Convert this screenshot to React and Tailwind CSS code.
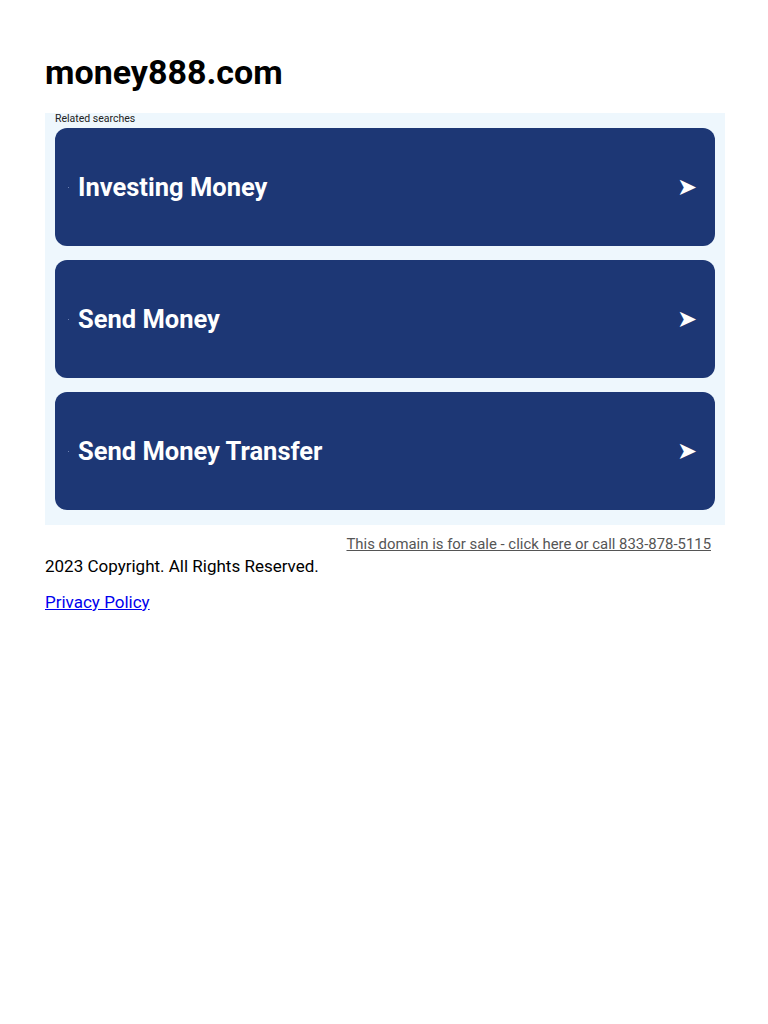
import React from "react";

const searches = ["Investing Money", "Send Money", "Send Money Transfer"];

export default function App() {
  return (
    <div className="min-h-screen bg-white pl-[45px] pr-[43px] pt-[51px]" style={{ fontFamily: "Roboto, 'Liberation Sans', sans-serif" }}>
      <h1 className="text-[34px] font-bold leading-[42px] text-black">money888.com</h1>

      <div className="mt-[20px] bg-[#eef7fd] px-[10px] pb-[15px]">
        <div className="mb-[4px] text-[10.5px] leading-[11px] text-[#222]">Related searches</div>
        <div className="flex flex-col gap-[14px]">
          {searches.map((s) => (
            <a
              key={s}
              href="#"
              className="flex h-[118px] items-center rounded-[12px] bg-[#1d3775] pl-[13px] pr-[18px] text-white"
            >
              <span className="mr-[9px] h-[1px] w-[1px] bg-[#6b80b0]" />
              <span className="flex-1 text-[25.5px] font-bold">{s}</span>
              <span className="text-[24px] leading-none">➤</span>
            </a>
          ))}
        </div>
      </div>

      <div className="mt-[10px] flex justify-end pr-[14px]">
        <a href="#" className="text-[14.9px] leading-[18px] text-[#555] underline">
          This domain is for sale - click here or call 833-878-5115
        </a>
      </div>
      <p className="mt-[3px] text-[17px] leading-[20px] text-black">2023 Copyright. All Rights Reserved.</p>
      <a href="#" className="mt-[16px] inline-block text-[17px] leading-[20px] text-[#0000ee] underline">
        Privacy Policy
      </a>
    </div>
  );
}
